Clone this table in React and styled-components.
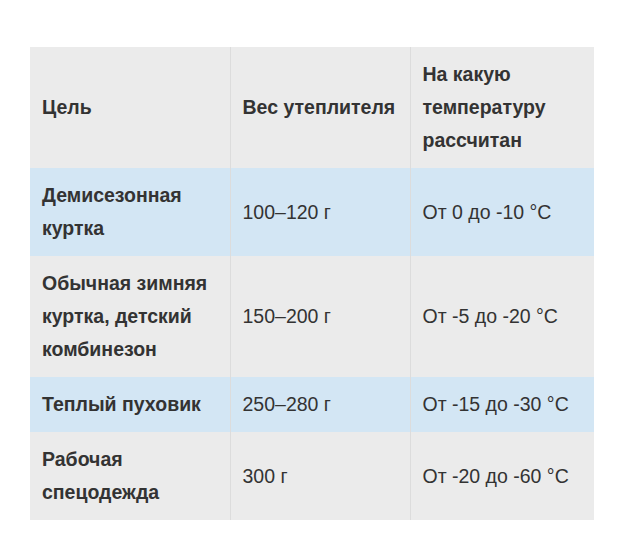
import React from "react";
import styled, { createGlobalStyle } from "styled-components";

const GlobalStyle = createGlobalStyle`
  body {
    margin: 0;
    background: #ffffff;
    font-family: "Liberation Sans", Arial, sans-serif;
  }
`;

const Page = styled.div`
  padding: 47px 0 0 30px;
`;

const Table = styled.table`
  border-collapse: collapse;
  table-layout: fixed;
  width: 564px;
  color: #333333;
  font-size: 19.5px;
  line-height: 33px;
`;

const Row = styled.tr`
  background: ${(p) => (p.$highlight ? "#d3e6f4" : "#ebebeb")};
`;

const Cell = styled.td`
  padding: 11px 11px 11px 12px;
  vertical-align: middle;
  font-weight: ${(p) => (p.$bold ? 700 : 400)};
  border-left: 1px solid #dcdcdc;
  &:first-child {
    border-left: none;
  }
`;

const HeadCell = styled(Cell).attrs({ as: "th" })`
  text-align: left;
  font-weight: 700;
`;

const rows = [
  { goal: "Демисезонная куртка", weight: "100–120 г", temp: "От 0 до -10 °C", highlight: true },
  { goal: "Обычная зимняя куртка, детский комбинезон", weight: "150–200 г", temp: "От -5 до -20 °C" },
  { goal: "Теплый пуховик", weight: "250–280 г", temp: "От -15 до -30 °C", highlight: true },
  { goal: "Рабочая спецодежда", weight: "300 г", temp: "От -20 до -60 °C" },
];

export default function App() {
  return (
    <Page>
      <GlobalStyle />
      <Table>
        <colgroup>
          <col style={{ width: 200 }} />
          <col style={{ width: 180 }} />
          <col style={{ width: 184 }} />
        </colgroup>
        <thead>
          <Row>
            <HeadCell>Цель</HeadCell>
            <HeadCell>Вес утеплителя</HeadCell>
            <HeadCell>На какую температуру рассчитан</HeadCell>
          </Row>
        </thead>
        <tbody>
          {rows.map((r) => (
            <Row key={r.goal} $highlight={r.highlight}>
              <Cell $bold>{r.goal}</Cell>
              <Cell>{r.weight}</Cell>
              <Cell>{r.temp}</Cell>
            </Row>
          ))}
        </tbody>
      </Table>
    </Page>
  );
}
